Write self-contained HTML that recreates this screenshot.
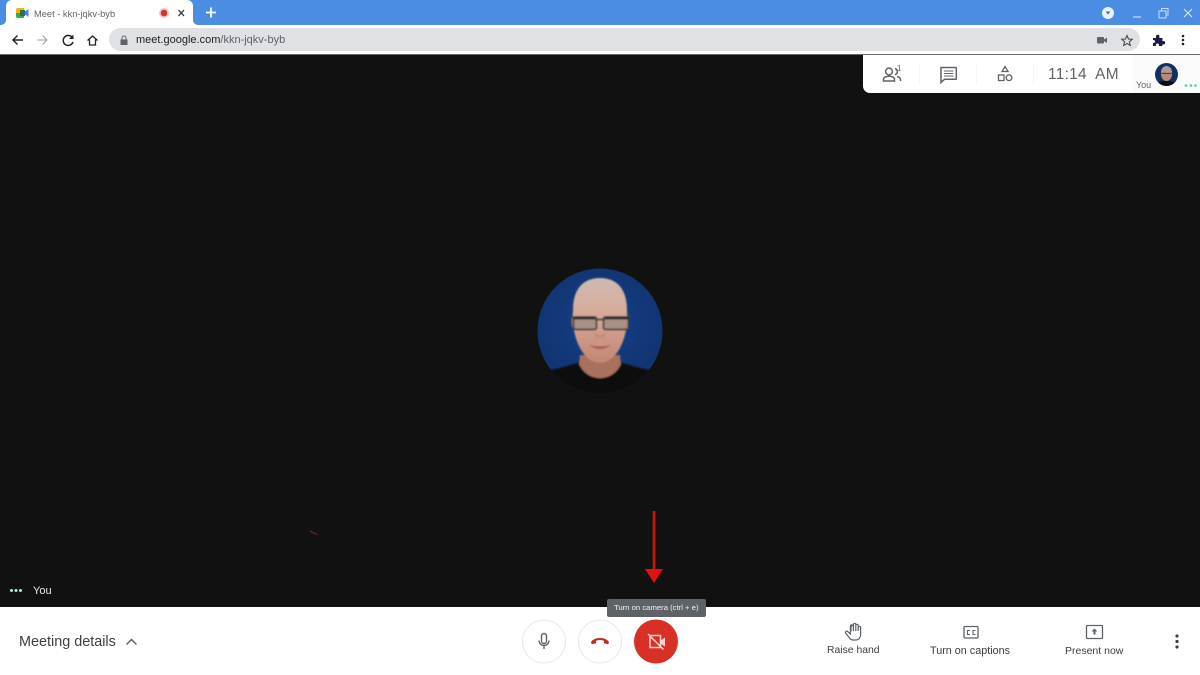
<!DOCTYPE html>
<html><head><meta charset="utf-8">
<style>
html,body{margin:0;padding:0;width:1200px;height:675px;overflow:hidden;background:#111;font-family:"Liberation Sans",sans-serif}
.a{position:absolute}
.t{position:absolute;white-space:nowrap;color:#5f6368}
svg{position:absolute;overflow:visible}
</style></head><body>
<div class="a" style="left:0;top:0;width:1200px;height:26px;background:#4a8de3"></div>
<div class="a" style="left:0;top:25px;width:1200px;height:30px;background:#fff"></div>
<div class="a" style="left:0;top:54px;width:1200px;height:1px;background:#6a6a6a"></div>
<div class="a" style="left:6px;top:0;width:187px;height:27px;background:#fff;border-radius:6px 6px 0 0"></div>
<div class="a" style="left:109px;top:28px;width:1031px;height:23px;background:#dfe1e5;border-radius:12px"></div>
<svg style="left:0;top:0" width="300" height="56">
<path d="M6 20a5 5 0 0 1-5 5h5z" fill="#fff"/><path d="M193 20a5 5 0 0 0 5 5h-5z" fill="#fff"/>
<path d="M18 8h6v5h-8v-3a2 2 0 0 1 2-2z" fill="#f4b400"/><path d="M16 13h8v5h-6a2 2 0 0 1-2-2z" fill="#34a853"/><rect x="20" y="10" width="5" height="6" fill="#2a6f4f"/><path d="M25 11.500l3.500-2.500v8l-3.500-2.500z" fill="#4285f4"/>
<circle cx="164" cy="13" r="5" fill="#eec5c4"/><circle cx="164" cy="13" r="3.300" fill="#d1362f"/>
<path d="M178.500 10l5.500 6M184 10l-5.500 6" stroke="#3c4043" stroke-width="1.300"/>
<path d="M206 12.500h10M211 7.500v10" stroke="#fff" stroke-width="1.800"/>
<path d="M23 40H13M17.500 35.500L13 40l4.500 4.500" fill="none" stroke="#202124" stroke-width="1.400"/>
<path d="M37 40h10M42.500 35.500L47 40l-4.500 4.500" fill="none" stroke="#a0a4a8" stroke-width="1.100"/>
<path d="M72.300 37.500A5 5 0 1 0 73 42" fill="none" stroke="#202124" stroke-width="1.500"/><path d="M73.500 34.500v4.500h-4.500z" fill="#202124"/>
<path d="M87.500 40.500l5-4.500 5 4.500M89.500 39.500V45h6v-5.500" fill="none" stroke="#202124" stroke-width="1.300"/>
<path d="M120.500 39.500h7v5.500h-7z" fill="#5f6368"/><path d="M122 39.500v-1.500a2 2 0 0 1 4 0v1.500" fill="none" stroke="#5f6368"/>
</svg>
<div class="t" style="left:34px;top:7.500px;font-size:9.300px;line-height:12px;color:#5f6368">Meet - kkn-jqkv-byb</div>
<div class="t" style="left:136px;top:33px;font-size:11px;line-height:14px;color:#202124">meet.google.com<span style="color:#5f6368">/kkn-jqkv-byb</span></div>
<svg style="left:0;top:0" width="1200" height="100">
<rect x="1097" y="37" width="7" height="6.500" rx="1" fill="#5f6368"/><path d="M1104 39.500l3-2v5.500l-3-2z" fill="#5f6368"/>
<path d="M1127 35.500l1.500 3.500 3.800.3-2.900 2.500.9 3.700-3.300-2-3.300 2 .9-3.700-2.900-2.500 3.800-.3z" fill="none" stroke="#3c4043" stroke-width="1"/>
<path d="M1153 38h3v-1.500a1.700 1.700 0 0 1 3.400 0V38h3v3h1a1.700 1.700 0 0 1 0 3.400h-1V46h-3.500v-1a1.500 1.500 0 0 0-3 0v1H1153v-3h1a1.600 1.600 0 0 0 0-3h-1z" fill="#1a1a4b"/>
<circle cx="1183" cy="36" r="1.300" fill="#202124"/><circle cx="1183" cy="40" r="1.300" fill="#202124"/><circle cx="1183" cy="44" r="1.300" fill="#202124"/>
<circle cx="1108" cy="13" r="6" fill="#e9f1fb"/><path d="M1105.500 11.500h5l-2.500 3z" fill="#4a6fa5"/>
<path d="M1133 17h8" stroke="#c9dcf5" stroke-width="1.200"/>
<rect x="1159" y="11" width="7" height="7" fill="none" stroke="#c9dcf5"/><path d="M1161.500 11V8.500h6.500V15h-2" fill="none" stroke="#c9dcf5"/>
<path d="M1184 9l8 8M1192 9l-8 8" stroke="#d5e4f7" stroke-width="1.200"/>
</svg>
<div class="a" style="left:863px;top:55px;width:337px;height:38px;background:#fff;border-radius:0 0 0 7px"></div>
<div class="a" style="left:1133px;top:55px;width:67px;height:38px;background:#fafafa"></div>
<svg style="left:0;top:0" width="1200" height="100">
<g fill="none" stroke="#5f6368" stroke-width="1.500">
<circle cx="889" cy="71.500" r="3.400"/><path d="M883.500 81v-1.800c0-2 3-3 5.500-3s5.500 1 5.500 3V81z"/><path d="M895 68.500a3.300 3.300 0 0 1 0 6.300M897 76.500c2 .5 3.500 1.500 3.500 3V81"/>
<path d="M941 67.500h14.500a.8.800 0 0 1 .8.8v10.200a.8.800 0 0 1-.8.800H944.500L941 82.500z"/>
<path d="M944 71h9.500M944 73.500h9.500M944 76h9.500" stroke-width="1.100"/>
<path d="M1005 66.500l3 5h-6z" stroke-width="1.300"/><rect x="998.500" y="75" width="5.500" height="5.500" stroke-width="1.300"/><circle cx="1009" cy="77.700" r="2.900" stroke-width="1.300"/>
</g>
<path d="M919.500 65v19M976.500 65v19M1033.500 65v19" stroke="#f4f4f4"/>
</svg>
<div class="t" style="left:897px;top:64px;font-size:8px;line-height:9px;color:#5f6368">1</div>
<div class="t" style="left:1048px;top:66px;font-size:15.400px;line-height:18px;color:#5f6368;letter-spacing:.3px">11:14&nbsp; AM</div>
<div class="t" style="left:1136px;top:80px;font-size:9px;line-height:11px;color:#5f6368">You</div>
<svg style="left:0;top:0" width="1200" height="100">
<clipPath id="s"><circle cx="1166.500" cy="74.500" r="11.500"/></clipPath>
<g clip-path="url(#s)"><rect x="1155" y="63" width="24" height="24" fill="#14305e"/><ellipse cx="1166.500" cy="74" rx="5.500" ry="7" fill="#b98a7c"/><path d="M1161 72a5.500 6 0 0 1 11 0z" fill="#a89a98"/><path d="M1155 87c2-5 6-6 11.500-6s9.500 1 11.500 6z" fill="#0c0c10"/><path d="M1161.500 73.500h10" stroke="#444" stroke-width="1"/></g>
<circle cx="1186" cy="85.500" r="1.300" fill="#5bcdb0"/><circle cx="1191" cy="85.500" r="1.300" fill="#5bcdb0"/><circle cx="1195.500" cy="85.500" r="1.300" fill="#5bcdb0"/>
</svg>

<svg style="left:520px;top:260px" width="160" height="140">
<defs><clipPath id="c"><circle cx="80" cy="71" r="62.500"/></clipPath>
<radialGradient id="b" cx=".5" cy=".45" r=".6"><stop offset="0" stop-color="#14408a"/><stop offset="1" stop-color="#112f66"/></radialGradient>
<linearGradient id="h" x1="0" y1="0" x2="0" y2="1"><stop offset="0" stop-color="#cdbab4"/><stop offset=".35" stop-color="#d8ad9c"/><stop offset="1" stop-color="#c48674"/></linearGradient>
<filter id="f" x="-10%" y="-10%" width="120%" height="120%"><feGaussianBlur stdDeviation=".7"/></filter></defs>
<g clip-path="url(#c)">
<rect width="160" height="140" fill="url(#b)"/>
<g filter="url(#f)">
<path d="M0 140c2-18 18-28 40-32 10-3 16-4 20-6h40c4 2 10 3 20 6 22 4 38 14 40 32z" fill="#0c0c10"/>
<path d="M60 95h40l1 9c-4 9-12 14-21 14s-17-5-21-14z" fill="#a96f5e"/>
<path d="M53 50C53 28 64 18 80 18s27 10 27 32c1 17-2 28-7 38-5 9-12 15-20 15s-15-6-20-15c-5-10-8-21-7-38z" fill="url(#h)"/>
<path d="M52 56c-1 8 0 14 3 14zM108 56c1 8 0 14-3 14z" fill="#c0907e"/>
<path d="M69 85q11 3 22 0q-11 8-22 0z" fill="#a8564e"/>
<path d="M76 72q4 7 8 0l1 6h-10z" fill="#b88270" opacity=".55"/>
<g fill="#8f8582" fill-opacity=".6" stroke="#3a3a3c" stroke-width="1.700"><rect x="53.500" y="57" width="23" height="12.500" rx="2"/><rect x="83.500" y="57" width="25" height="12.500" rx="2"/></g>
<path d="M50.500 54.500l3 3M76.500 59.500h7M108.500 57.500l3-3" stroke="#3a3a3c" stroke-width="1.800"/>
<path d="M54 58.500h22M84 58.500h24" stroke="#252527" stroke-width="2"/>
</g></g></svg>

<svg style="left:300px;top:505px" width="380" height="85">
<path d="M10 26l7 3.500" stroke="#7a2420" stroke-width="1.200"/>
<path d="M354 6v60" stroke="#d20f0f" stroke-width="2.600"/><path d="M345 64h18l-9 14z" fill="#e5100f"/>
</svg>

<svg style="left:0;top:580px" width="30" height="20"><circle cx="11.500" cy="10.500" r="1.500" fill="#a3f0d8"/><circle cx="16" cy="10.500" r="1.500" fill="#a3f0d8"/><circle cx="20.500" cy="10.500" r="1.500" fill="#a3f0d8"/></svg>
<div class="t" style="left:33px;top:585px;font-size:11px;line-height:13px;color:#e8eaed">You</div>

<div class="a" style="left:0;top:607px;width:1200px;height:68px;background:#fff"></div>
<div class="t" style="left:19px;top:633px;font-size:14.400px;line-height:18px;color:#3c4043">Meeting details</div>
<svg style="left:0;top:607px" width="1200" height="68">
<path d="M126.500 37.500l5-5 5 5" fill="none" stroke="#5f6368" stroke-width="1.500"/>
<circle cx="544" cy="34.500" r="21.500" fill="#fff" stroke="#e8e8e8"/>
<circle cx="600" cy="34.500" r="21.500" fill="#fff" stroke="#e8e8e8"/>
<circle cx="656" cy="34.500" r="22" fill="#d93025"/>
<rect x="541.500" y="26.500" width="5" height="10" rx="2.500" fill="none" stroke="#5f6368" stroke-width="1.400"/>
<path d="M539 33.500a5 5 0 0 0 10 0M544 38.500v3.500" fill="none" stroke="#5f6368" stroke-width="1.400"/>
<path d="M591 35.500c2-6 16-6 18 0l-.8 1.800-4.200-1v-2.500c-3-1-5-1-8 0v2.500l-4.200 1z" fill="#c5281c"/>
<path d="M650 28.500h10.500v12H650z" fill="none" stroke="#f5d5d2" stroke-width="1.500"/><path d="M660.500 33.500l4.500-3v9l-4.500-3z" fill="#f5d5d2"/><path d="M648 27l15.500 15.500" stroke="#f5d5d2" stroke-width="1.500"/>
<g fill="none" stroke="#5f6368" stroke-width="1.200">
<path d="M851 24.500v-4.500a1.200 1.200 0 0 1 2.400 0M853.400 24v-6.500a1.200 1.200 0 0 1 2.400 0V24M855.800 24v-5.500a1.200 1.200 0 0 1 2.400 0V24M858.200 24v-3.500a1.200 1.200 0 0 1 2.400 0v7c0 3.500-2 5.500-5 5.500h-2.500c-2 0-3-1-4-2.500l-3.500-4.500c-.7-1.200 1-2.500 2-1.500l2.800 2.500v-8a1.200 1.200 0 0 1 2.400 0" stroke-width="1.200"/>
<rect x="964" y="19.500" width="14" height="11.500" rx="1" stroke-width="1.300"/>
<path d="M970 23.500h-2.500v4h2.500M975.500 23.500h-2.500v4h2.500" stroke-width="1"/>
<rect x="1086.500" y="18.500" width="16" height="13" rx="1" stroke-width="1.300"/>
</g>
<path d="M1094.500 21.500l3 3h-2v3h-2v-3h-2z" fill="#5f6368"/>
<circle cx="1177" cy="29" r="1.600" fill="#3c4043"/><circle cx="1177" cy="34.500" r="1.600" fill="#3c4043"/><circle cx="1177" cy="40" r="1.600" fill="#3c4043"/>
</svg>
<div class="a" style="left:607px;top:599px;width:99px;height:18px;background:#5f6368;border-radius:2px"></div>
<div class="t" style="left:614px;top:603px;font-size:7.700px;line-height:10px;color:#f1f3f4">Turn on camera (ctrl + e)</div>
<div class="t" style="left:827px;top:644.500px;font-size:10.400px;line-height:12px;color:#3c4043">Raise hand</div>
<div class="t" style="left:930px;top:644.500px;font-size:10.800px;line-height:12px;color:#3c4043">Turn on captions</div>
<div class="t" style="left:1065px;top:644.500px;font-size:10.500px;line-height:12px;color:#3c4043">Present now</div>
</body></html>
